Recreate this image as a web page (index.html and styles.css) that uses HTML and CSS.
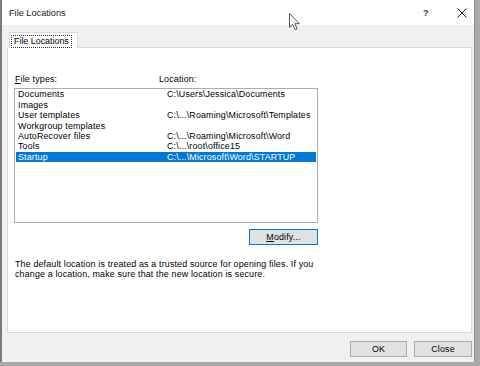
FILE: index.html
```html
<!DOCTYPE html>
<html lang="en">
<head>
    <meta charset="UTF-8">
    <title>File Locations</title>
    <link rel="stylesheet" href="styles.css">
</head>
<body>
    <div class="window">
        <div class="titlebar">
            <span class="title">File Locations</span>
            <span class="help">?</span>
            <span class="close-x">
                <svg width="10" height="10" viewBox="0 0 10 10"><path d="M0.5 0.5 L9.5 9.5 M9.5 0.5 L0.5 9.5" stroke="#1a1a1a" stroke-width="1" fill="none"/></svg>
            </span>
        </div>

        <div class="content">
            <div class="tabs">
                <div class="tab"><span class="focus">File Locations</span></div>
            </div>

            <div class="panel">
                <div class="labels">
                    <span class="col-type"><u>F</u>ile types:</span>
                    <span>Location:</span>
                </div>

                <div class="listbox">
                    <div class="row"><span class="col-type">Documents</span><span>C:\Users\Jessica\Documents</span></div>
                    <div class="row"><span class="col-type">Images</span><span></span></div>
                    <div class="row"><span class="col-type">User templates</span><span>C:\...\Roaming\Microsoft\Templates</span></div>
                    <div class="row"><span class="col-type">Workgroup templates</span><span></span></div>
                    <div class="row"><span class="col-type">AutoRecover files</span><span>C:\...\Roaming\Microsoft\Word</span></div>
                    <div class="row"><span class="col-type">Tools</span><span>C:\...\root\office15</span></div>
                    <div class="row selected"><span class="col-type">Startup</span><span>C:\...\Microsoft\Word\STARTUP</span></div>
                </div>

                <div class="modify-row">
                    <button class="btn btn-default"><u>M</u>odify...</button>
                </div>

                <p class="note">The default location is treated as a trusted source for opening files. If you change a location, make sure that the new location is secure.</p>
            </div>

            <div class="footer">
                <button class="btn">OK</button>
                <button class="btn">Close</button>
            </div>
        </div>
    </div>

    <svg class="cursor" width="12" height="18" viewBox="0 0 12 18">
        <path d="M0.5 0.5 L0.5 14.5 L3.8 11.4 L6.2 16.8 L8.2 15.9 L5.9 10.7 L10.5 10.7 Z" fill="#fff" stroke="#555" stroke-width="1" stroke-linejoin="miter"/>
    </svg>
</body>
</html>
```

FILE: styles.css
```css
body {
    margin: 0;
    width: 480px;
    height: 366px;
    overflow: hidden;
    background: #a9a9a9;
    font-family: "Liberation Sans", Arial, sans-serif;
    font-size: 8.9px;
    letter-spacing: 0.16px;
    color: #000;
    position: relative;
}
.window {
    width: 472px;
    height: 362px;
    border-left: 2px solid #7a7a7a;
    border-right: 1px solid #8c8c8c;
    background: #f0f0f0;
    display: flex;
    flex-direction: column;
}
.titlebar {
    height: 25px;
    background: #fff;
    display: flex;
    align-items: center;
    padding-left: 7px;
    flex-shrink: 0;
}
.title {
    font-size: 9.2px;
    letter-spacing: 0;
    color: #1a1a1a;
    flex: 1;
}
.help {
    font-size: 9px;
    font-weight: bold;
    color: #333;
    width: 34px;
}
.close-x {
    width: 16px;
    display: flex;
    margin-right: 1px;
}
.content {
    flex: 1;
    padding: 7px 2px 0 5px;
    display: flex;
    flex-direction: column;
}
.tabs {
    display: flex;
    padding-left: 2px;
    height: 16px;
    position: relative;
    z-index: 1;
}
.tab {
    width: 69px;
    height: 16px;
    background: #fff;
    border: 1px solid #d9d9d9;
    border-bottom: none;
    padding: 2px 0 0 1px;
    box-sizing: border-box;
}
.focus {
    display: inline-block;
    border: 1px dotted #333;
    padding: 0 2px;
    line-height: 10px;
    height: 11px;
    letter-spacing: 0;
}
.panel {
    height: 286px;
    box-sizing: border-box;
    background: #fff;
    border: 1px solid #d9d9d9;
    margin-top: -1px;
    padding: 26px 6px 0 6px;
}
.labels {
    display: flex;
    line-height: 10.4px;
    padding-left: 1px;
}
.col-type {
    width: 144px;
    flex-shrink: 0;
}
.listbox {
    margin-top: 4px;
    width: 304px;
    height: 135px;
    box-sizing: border-box;
    border: 1px solid #adadad;
    padding: 0 1px;
}
.row {
    display: flex;
    height: 10.4px;
    line-height: 10.4px;
    padding-left: 2px;
    white-space: nowrap;
}
.row .col-type {
    width: 149px;
}
.row.selected {
    background: #0078d7;
    color: #fff;
}
.modify-row {
    width: 304px;
    display: flex;
    justify-content: flex-end;
    margin-top: 6px;
}
.btn {
    font-family: inherit;
    font-size: 8.9px;
    letter-spacing: inherit;
    color: #000;
    background: #e1e1e1;
    border: 1px solid #adadad;
    height: 16px;
    width: 57px;
    padding: 0;
    line-height: 13px;
}
.btn-default {
    width: 69px;
    border-color: #0078d7;
}
.note {
    margin: 15px 0 0 1px;
    width: 314px;
    line-height: 9.6px;
}
.footer {
    display: flex;
    justify-content: flex-end;
    gap: 7px;
    padding-top: 8px;
}
.footer .btn:last-child {
    width: 58px;
}
.cursor {
    position: absolute;
    left: 289px;
    top: 13px;
}
```
